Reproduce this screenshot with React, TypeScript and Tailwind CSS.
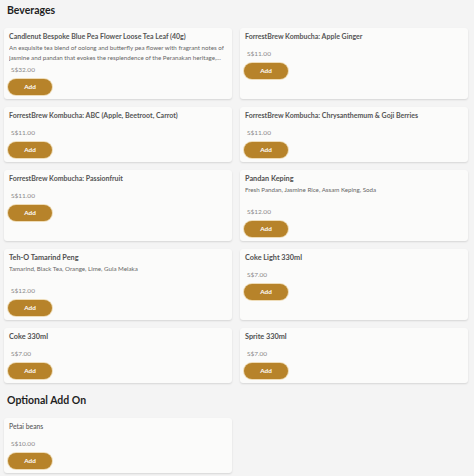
import React from "react";

type Item = { name: string; desc?: string; price: string; big?: boolean; small?: boolean };

const beverages: Item[] = [
  {
    name: "Candlenut Bespoke Blue Pea Flower Loose Tea Leaf (40g)",
    desc: "An exquisite tea blend of oolong and butterfly pea flower with fragrant notes of jasmine and pandan that evokes the resplendence of the Peranakan heritage, giving a refreshing finish.",
    price: "S$32.00",
  },
  { name: "ForrestBrew Kombucha: Apple Ginger", price: "S$11.00" },
  { name: "ForrestBrew Kombucha: ABC (Apple, Beetroot, Carrot)", price: "S$11.00" },
  { name: "ForrestBrew Kombucha: Chrysanthemum & Goji Berries", price: "S$11.00" },
  { name: "ForrestBrew Kombucha: Passionfruit", price: "S$11.00" },
  { name: "Pandan Keping", desc: "Fresh Pandan, Jasmine Rice, Assam Keping, Soda", price: "S$12.00", big: true },
  { name: "Teh-O Tamarind Peng", desc: "Tamarind, Black Tea, Orange, Lime, Gula Melaka", price: "S$12.00", big: true },
  { name: "Coke Light 330ml", price: "S$7.00", big: true },
  { name: "Coke 330ml", price: "S$7.00", big: true },
  { name: "Sprite 330ml", price: "S$7.00", big: true },
];

const addons: Item[] = [{ name: "Petai beans", price: "S$10.00", small: true }];

function Card({ item }: { item: Item }) {
  const titleCls = item.big
    ? "text-[7.3px] font-bold text-[#505050]"
    : item.small
    ? "text-[6.8px] font-medium text-[#5a5a5a]"
    : "text-[7px] font-bold text-[#555]";
  return (
    <div className="bg-[#fbfbfa] rounded-[3px] shadow-[0_1px_2px_rgba(0,0,0,0.13)] px-[4px] pt-[3px] pb-[4px] flex flex-col items-start">
      <div className={`leading-[11px] pl-[1px] whitespace-nowrap ${titleCls}`}>{item.name}</div>
      {item.desc !== undefined && (
        <div className="mt-[1px] h-[20px] w-full pl-[1px] pr-[4px] text-[6.2px] leading-[10px] text-[#666] overflow-hidden">
          <div className="line-clamp-2">{item.desc}</div>
        </div>
      )}
      <div
        className={`${item.desc !== undefined ? "mt-[1px]" : "mt-[6px]"} leading-[12px] ml-[3px] text-[6.5px] text-[#8a8a8a]`}
      >
        {item.price}
      </div>
      <button className="mt-[3px] w-[44px] h-[16px] rounded-full bg-[#b7832a] text-white text-[6.4px] font-bold flex items-center justify-center shadow-[0_0_0_1px_rgba(230,200,140,0.6)]">
        Add
      </button>
    </div>
  );
}

function Section({ title, items, className }: { title: string; items: Item[]; className?: string }) {
  return (
    <section className={className}>
      <h2 className="ml-[3px] text-[10.5px] leading-[20px] font-bold text-[#1f1f1f]">{title}</h2>
      <div className="mt-[8px] grid grid-cols-2 gap-[8px]">
        {items.map((it) => (
          <Card key={it.name} item={it} />
        ))}
      </div>
    </section>
  );
}

export default function App() {
  return (
    <div
      className="w-[474px] min-h-[476px] bg-[#f4f4f4] pl-[4px] pr-[6px] overflow-hidden"
      style={{ fontFamily: "Lato, 'Open Sans', sans-serif" }}
    >
      <Section title="Beverages" items={beverages} />
      <Section title="Optional Add On" items={addons} className="mt-[7px]" />
    </div>
  );
}
